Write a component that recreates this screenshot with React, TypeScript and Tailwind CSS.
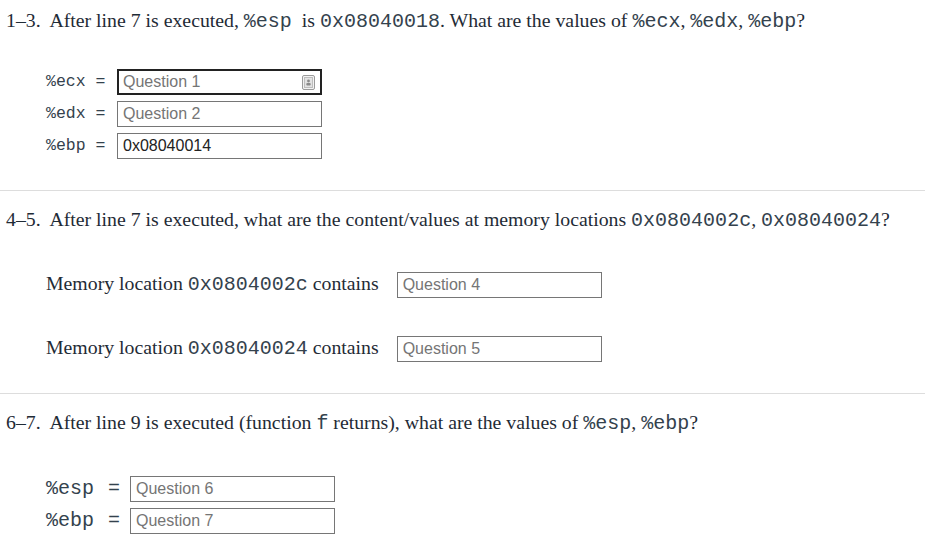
import React from "react";

const serif = "font-['Liberation_Serif','Times_New_Roman',serif]";
const mono = "font-['Liberation_Mono','Courier_New',monospace]";
const sans = "font-['Liberation_Sans',Arial,sans-serif]";

function Code({ children, size = "text-[20px]" }: { children: React.ReactNode; size?: string }) {
  return <span className={`${mono} ${size} text-[#34424d]`}>{children}</span>;
}

function Field({ placeholder, value, focused }: { placeholder: string; value?: string; focused?: boolean }) {
  return (
    <div
      className={`relative shrink-0 w-[205px] h-[26px] flex items-center bg-white ${
        focused ? "border-2 border-[#222] pl-[4px]" : "border border-[#767676] pl-[5px]"
      }`}
    >
      <span className={`${sans} text-[16px] leading-none ${value ? "text-[#222]" : "text-[#757575]"}`}>
        {value ?? placeholder}
      </span>
      {focused && (
        <svg className="absolute right-[5px] top-[4px]" width="13" height="15" viewBox="0 0 13 15">
          <rect x="0.5" y="0.5" width="12" height="14" rx="1.5" fill="#f2f2f2" stroke="#9a9a9a" />
          <rect x="2.5" y="2.5" width="8" height="10" fill="#e2e2e2" stroke="#bdbdbd" />
          <circle cx="6.5" cy="6" r="1.4" fill="#8a8a8a" />
          <rect x="4.3" y="8" width="4.4" height="2.6" rx="1" fill="#8a8a8a" />
        </svg>
      )}
    </div>
  );
}

export default function App() {
  return (
    <div className={`${serif} text-[#1f2b36] bg-white w-[925px] h-[547px] overflow-hidden pt-[8px]`}>
      <div className="px-[6px]">
        <p className="text-[19.8px] leading-6 whitespace-nowrap">
          1–3.&nbsp; After line 7 is executed, <Code>%esp</Code>&nbsp; is <Code>0x08040018</Code>. What are the values of{" "}
          <Code>%ecx</Code>, <Code>%edx</Code>, <Code>%ebp</Code>?
        </p>
        <div className="mt-[35px] ml-[40px] flex flex-col gap-[6px]">
          {[
            { l: "%ecx =", p: "Question 1", f: true },
            { l: "%edx =", p: "Question 2" },
            { l: "%ebp =", p: "Question 2", v: "0x08040014" },
          ].map((r) => (
            <div key={r.l} className="flex items-center">
              <span className={`${mono} text-[16.5px] leading-[26px] w-[71px] whitespace-pre text-[#34424d]`}>{r.l}</span>
              <Field placeholder={r.p} value={r.v} focused={r.f} />
            </div>
          ))}
        </div>
      </div>

      <div className="mt-[31px] border-t border-[#dddddd]" />

      <div className="px-[6px] pt-[16px]">
        <p className="text-[19.8px] leading-6 whitespace-nowrap">
          4–5.&nbsp; After line 7 is executed, what are the content/values at memory locations <Code>0x0804002c</Code>,{" "}
          <Code>0x08040024</Code>?
        </p>
        <div className="mt-[39px] ml-[40px] flex flex-col gap-[38px]">
          {[
            { a: "0x0804002c", p: "Question 4" },
            { a: "0x08040024", p: "Question 5" },
          ].map((r) => (
            <div key={r.a} className="flex items-center gap-[18px]">
              <span className="text-[19.8px] leading-6 -mt-[3px] whitespace-nowrap">
                Memory location <Code>{r.a}</Code> contains
              </span>
              <Field placeholder={r.p} />
            </div>
          ))}
        </div>
      </div>

      <div className="mt-[31px] border-t border-[#dddddd]" />

      <div className="px-[6px] pt-[16px]">
        <p className="text-[19.8px] leading-6 whitespace-nowrap">
          6–7.&nbsp; After line 9 is executed (function <Code>f</Code> returns), what are the values of <Code>%esp</Code>,{" "}
          <Code>%ebp</Code>?
        </p>
        <div className="mt-[40px] ml-[40px] flex flex-col gap-[6px]">
          {[
            { l: "%esp", p: "Question 6" },
            { l: "%ebp", p: "Question 7" },
          ].map((r) => (
            <div key={r.l} className="flex items-center h-[26px]">
              <span className={`${mono} text-[20px] leading-[26px] w-[62px] text-[#34424d]`}>{r.l}</span>
              <span className={`${mono} text-[20px] leading-[26px] w-[22px] text-[#34424d]`}>=</span>
              <Field placeholder={r.p} />
            </div>
          ))}
        </div>
      </div>
    </div>
  );
}
